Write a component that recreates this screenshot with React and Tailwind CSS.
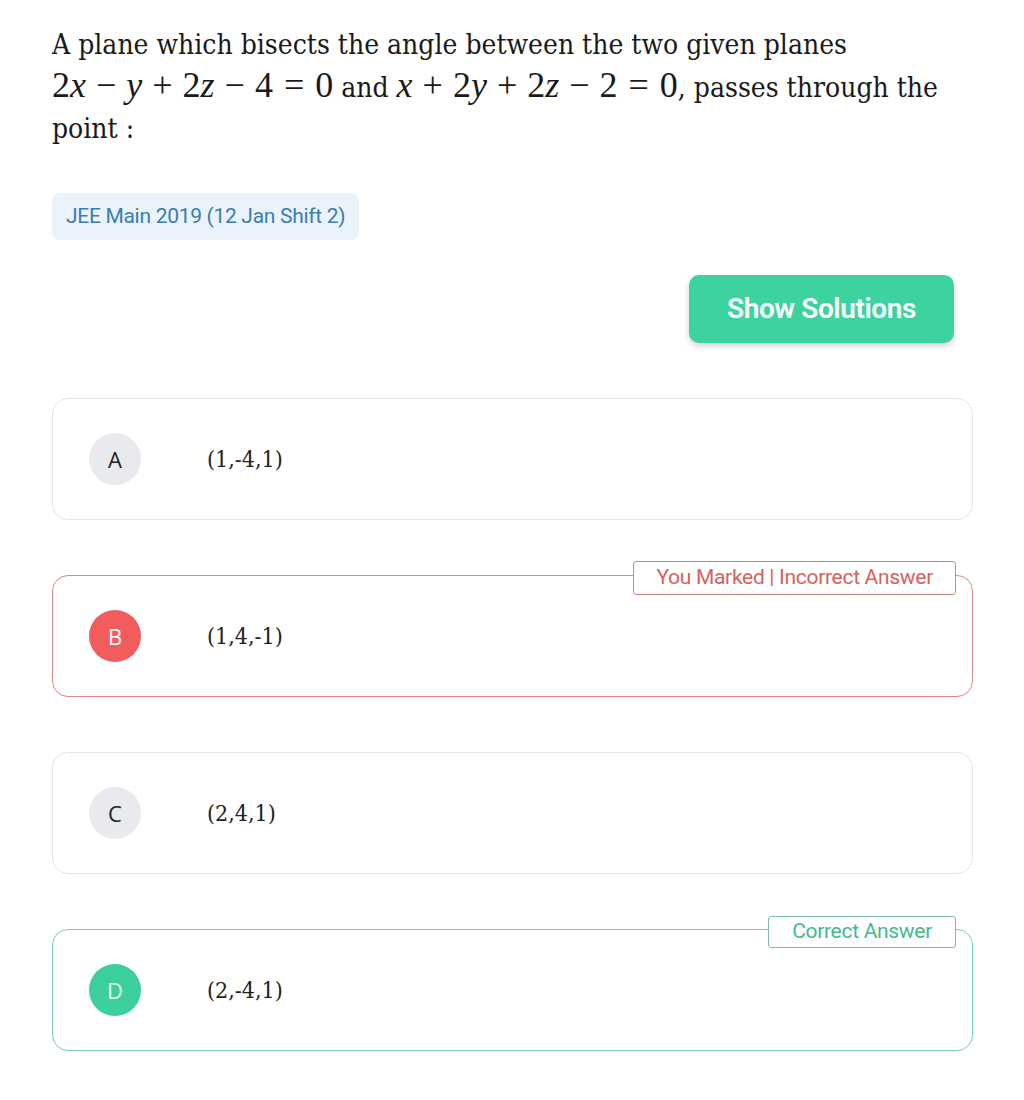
import React from 'react';

const serif = { fontFamily: '"DejaVu Serif Condensed", "DejaVu Serif", "Liberation Serif", serif' };
const mathFont = { fontFamily: '"Liberation Serif", "Times New Roman", serif' };

const options = [
  { key: 'A', text: '(1,-4,1)', state: 'none' },
  { key: 'B', text: '(1,4,-1)', state: 'wrong' },
  { key: 'C', text: '(2,4,1)', state: 'none' },
  { key: 'D', text: '(2,-4,1)', state: 'right' },
];

// tiny KaTeX-ish inline math: tokens are numbers, variables or operators
function Math({ expr }) {
  return (
    <span className="text-[36px]" style={mathFont}>
      {expr.split(' ').map((t, i) => {
        if (['−', '+', '='].includes(t)) {
          return <span key={i} className={t === '=' ? 'mx-[11px]' : 'mx-[10px]'}>{t}</span>;
        }
        return (
          <span key={i}>
            {t.split('').map((c, j) =>
              /[a-z]/.test(c) ? <span key={j} className="italic">{c}</span> : <span key={j}>{c}</span>
            )}
          </span>
        );
      })}
    </span>
  );
}

function Option({ opt }) {
  const border =
    opt.state === 'wrong'
      ? 'border-[#e0857f]'
      : opt.state === 'right'
      ? 'border-[#6fd3b0]'
      : 'border-[#e3e5e8]';
  const circle =
    opt.state === 'wrong'
      ? 'bg-[#f25c5c] text-white'
      : opt.state === 'right'
      ? 'bg-[#3ccf9b] text-[#e9fbf4]'
      : 'bg-[#e8eaee] text-[#222]';
  return (
    <div className={`relative h-[122px] rounded-[16px] border ${border} flex items-center pl-[36px]`}>
      {opt.state === 'wrong' && (
        <div className="absolute -top-[15px] right-[16px] h-[34px] px-[22px] flex items-center bg-white border border-[#c98884] rounded-[3px] text-[21px] tracking-[-0.3px] text-[#d9605c] font-['Roboto',sans-serif]">
          You Marked | Incorrect Answer
        </div>
      )}
      {opt.state === 'right' && (
        <div className="absolute -top-[14px] right-[16px] h-[32px] px-[23px] flex items-center bg-white border border-[#7fbfa8] rounded-[3px] text-[21px] tracking-[-0.3px] text-[#45b98e] font-['Roboto',sans-serif]">
          Correct Answer
        </div>
      )}
      <div className={`w-[52px] h-[52px] rounded-full flex items-center justify-center text-[22px] font-['Open_Sans',sans-serif] ${circle}`}>
        {opt.key}
      </div>
      <div className="ml-[66px] text-[23px] text-[#222]" style={serif}>
        {opt.text}
      </div>
    </div>
  );
}

export default function App() {
  return (
    <div className="w-[1024px] min-h-[1100px] bg-white px-[52px] pt-[24px]">
      {/* Question */}
      <div className="text-[28px] leading-[41px] text-[#1a1a1a] whitespace-nowrap" style={serif}>
        A plane which bisects the angle between the two given planes
        <br />
        <Math expr="2x − y + 2z − 4 = 0" /> and <Math expr="x + 2y + 2z − 2 = 0" />, passes through the
        <br />
        point :
      </div>

      {/* Exam tag */}
      <div className="mt-[44px] inline-flex h-[47px] items-center px-[14px] rounded-[8px] bg-[#eaf3fc] text-[21px] tracking-[-0.3px] text-[#3a7db0] font-['Roboto',sans-serif]">
        JEE Main 2019 (12 Jan Shift 2)
      </div>

      {/* Show solutions */}
      <div className="flex justify-end pr-[18px] mt-[35px]">
        <button className="w-[265px] h-[68px] rounded-[10px] bg-[#3dd39e] text-white text-[28px] font-semibold font-['Roboto',sans-serif] shadow-[0_3px_6px_rgba(0,0,0,0.18)] tracking-[-0.4px]">
          Show Solutions
        </button>
      </div>

      {/* Options */}
      <div className="mt-[55px] flex flex-col gap-[55px] w-[921px]">
        {options.map((o) => (
          <Option key={o.key} opt={o} />
        ))}
      </div>
    </div>
  );
}
